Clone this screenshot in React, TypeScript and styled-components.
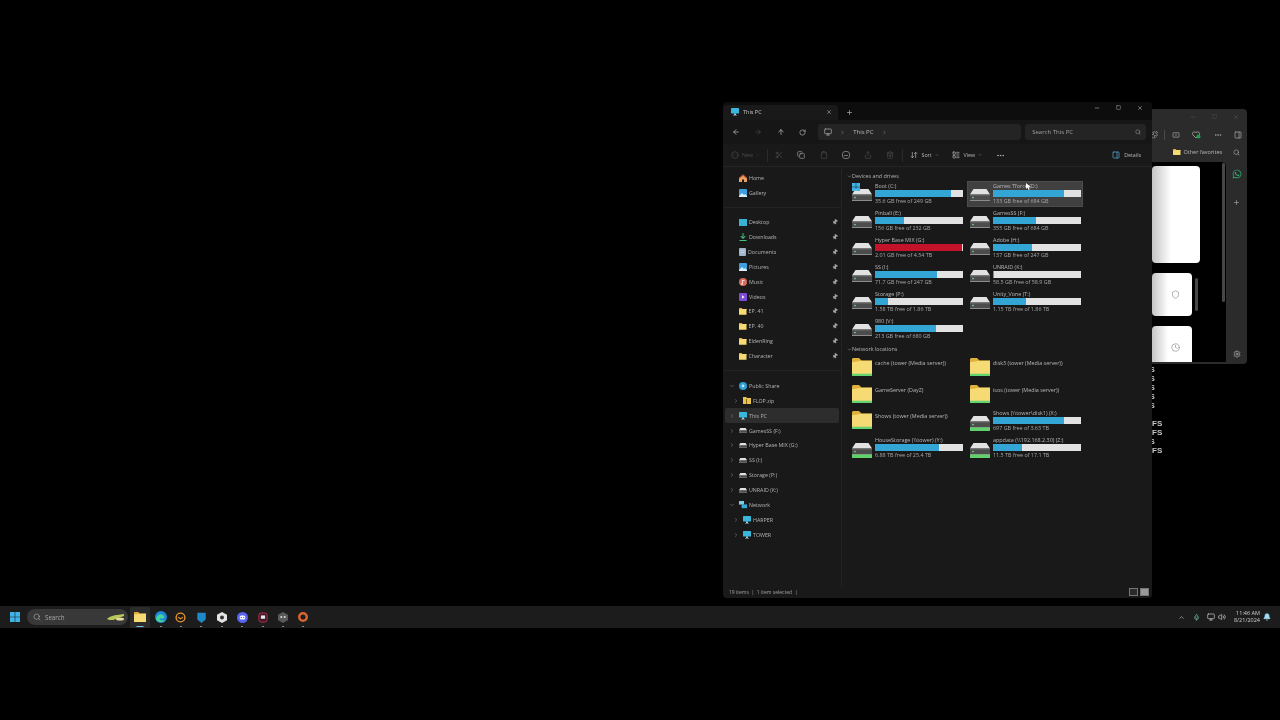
import React from "react";
import styled, { createGlobalStyle } from "styled-components";
import { FaWhatsapp } from "react-icons/fa";
import {
  ArrowDownUp,
  ArrowLeft,
  ArrowRight,
  ArrowUp,
  Bell,
  ChevronDown,
  ChevronRight,
  ChevronUp,
  CircleEllipsis,
  Clock,
  Clipboard,
  Copy,
  LayoutList,
  Mic,
  Minus,
  Monitor,
  MoreHorizontal,
  PanelRight,
  Pin,
  Plus,
  Puzzle,
  RotateCw,
  Scissors,
  Search,
  Settings,
  Share,
  Shield,
  Square,
  SquareSplitHorizontal,
  Trash2,
  Volume2,
  X,
} from "lucide-react";

const GlobalStyle = createGlobalStyle`
  html, body {
    margin: 0;
    padding: 0;
    background: #000;
    font-family: "Open Sans", "Noto Sans", sans-serif;
  }
`;

const Page = styled.div`
  width: 1280px;
  height: 720px;
  display: flex;
  flex-direction: column;
  overflow: hidden;
  background: #000;
  filter: blur(0.3px);
`;

const Desktop = styled.div`
  position: relative;
  height: 606px;
`;

/* Browser window that sits behind the explorer */
const BrowserWindow = styled.div`
  position: absolute;
  left: 1100px;
  top: 109px;
  width: 147px;
  height: 255px;
  display: flex;
  flex-direction: column;
  background: #2b2b2b;
  border-radius: 4px;
`;

const BrowserTitle = styled.div`
  height: 15px;
  display: flex;
  justify-content: flex-end;
  align-items: center;
  gap: 16px;
  padding-right: 8px;
  color: #585858;
`;

const BrowserTools = styled.div`
  height: 22px;
  display: flex;
  justify-content: flex-end;
  align-items: center;
  gap: 12.5px;
  padding-right: 5px;
  color: #b0b0b0;
`;

const ToolDivider = styled.div`
  width: 1px;
  height: 10px;
  margin: 0 -6.25px;
  background: #4a4a4a;
`;

const BrowserBody = styled.div`
  flex: 1;
  display: flex;
  min-height: 0;
`;

const BrowserColumn = styled.div`
  flex: 1;
  display: flex;
  flex-direction: column;
  min-width: 0;
  padding-bottom: 2px;
`;

const FavBar = styled.div`
  height: 12px;
  padding: 0 0 4px 73px;
  flex-shrink: 0;
  display: flex;
  align-items: center;
  gap: 3px;
  font-size: 5.5px;
  color: #b8b8b8;
`;

const BrowserContent = styled.div`
  flex: 1;
  position: relative;
  display: flex;
  flex-direction: column;
  align-items: flex-start;
  gap: 10px;
  padding: 4px 0 0 52px;
  background: #000;
  border-top-right-radius: 5px;
  overflow: hidden;
`;

const WhiteCard = styled.div<{ $w: number; $h: number }>`
  width: ${(p) => p.$w}px;
  height: ${(p) => p.$h}px;
  flex-shrink: 0;
  display: flex;
  align-items: center;
  justify-content: flex-end;
  padding-right: 12px;
  box-sizing: border-box;
  background: linear-gradient(90deg, #c4c4c4, #fff 40%);
  border-radius: 4px;
  color: #9a9a9a;
`;

const ScrollThumb = styled.div<{ $x: number; $y: number; $h: number }>`
  position: absolute;
  left: ${(p) => p.$x}px;
  top: ${(p) => p.$y}px;
  width: 3px;
  height: ${(p) => p.$h}px;
  border-radius: 2px;
  background: #474747;
`;

const BrowserRail = styled.div`
  width: 21px;
  display: flex;
  flex-direction: column;
  align-items: center;
  padding-top: 2.5px;
  color: #b0b0b0;
`;

const RailChat = styled.div`
  display: flex;
  margin: 13px 0 20px;
  color: #2bb673;
`;

const RailSpacer = styled.div`
  flex: 1;
`;

const RailGear = styled.div`
  display: flex;
  margin-bottom: 6px;
`;

const BehindText = styled.div`
  position: absolute;
  left: 1149.5px;
  top: 365px;
  font-family: "Liberation Sans", sans-serif;
  font-size: 8px;
  font-weight: 700;
  color: #c4c4c4;
`;

const BehindRow = styled.div<{ $indent: number }>`
  height: 9px;
  line-height: 9px;
  padding-left: ${(p) => p.$indent}px;
`;

/* File Explorer */
const ExplorerWindow = styled.div`
  position: absolute;
  left: 723px;
  top: 102px;
  width: 429px;
  height: 496px;
  display: flex;
  flex-direction: column;
  background: #191919;
  border-radius: 4px;
  overflow: hidden;
`;

const TabStrip = styled.div`
  height: 18px;
  flex-shrink: 0;
  display: flex;
  align-items: flex-end;
  background: #0d0d0d;
  color: #c8c8c8;
`;

const Tab = styled.div`
  width: 115px;
  height: 15px;
  display: flex;
  align-items: center;
  gap: 4px;
  padding: 0 6px 1px 8px;
  box-sizing: border-box;
  background: #191919;
  border-radius: 4px 4px 0 0;
  font-size: 5.5px;
  color: #c4c4c4;
`;

const TabTitle = styled.span`
  flex: 1;
`;

const NewTab = styled.div`
  margin: 0 0 4px 8px;
  display: flex;
`;

const WindowControls = styled.div`
  margin-left: auto;
  align-self: flex-start;
  display: flex;
  align-items: center;
  gap: 16px;
  height: 11px;
  padding-right: 9px;
`;

const AddressRow = styled.div`
  height: 24px;
  flex-shrink: 0;
  display: flex;
  align-items: center;
  padding: 0 4px 0 9px;
  background: #161616;
  color: #c8c8c8;
`;

const NavButton = styled.div<{ $dim?: boolean }>`
  width: 22.3px;
  display: flex;
  color: ${(p) => (p.$dim ? "#4c4c4c" : "#c8c8c8")};
`;

const Crumbs = styled.div`
  width: 203px;
  height: 16px;
  margin-left: -3px;
  padding-left: 6px;
  box-sizing: border-box;
  display: flex;
  align-items: center;
  gap: 8px;
  background: #242424;
  border-radius: 3px;
  font-size: 6px;
  color: #b8b8b8;
`;

const SearchBox = styled.div`
  width: 121px;
  height: 16px;
  margin-left: 4px;
  padding: 0 5px 0 7px;
  box-sizing: border-box;
  display: flex;
  align-items: center;
  justify-content: space-between;
  background: #242424;
  border-radius: 3px;
  font-size: 6px;
  color: #a0a0a0;
`;

const CommandBar = styled.div`
  height: 23px;
  flex-shrink: 0;
  display: flex;
  align-items: center;
  padding: 0 11px 0 8px;
  background: #191919;
  border-bottom: 1px solid #242424;
  color: #555;
  box-sizing: border-box;
`;

const CommandItem = styled.div<{ $w: number; $tone?: string }>`
  width: ${(p) => p.$w}px;
  display: flex;
  align-items: center;
  gap: 3px;
  font-size: 5.3px;
  color: ${(p) => p.$tone || "#4c4c4c"};
`;

const CommandDivider = styled.div`
  width: 1px;
  height: 13px;
  margin-right: 7px;
  background: #2a2a2a;
`;

const DetailsButton = styled.div`
  margin-left: auto;
  display: flex;
  align-items: center;
  gap: 4px;
  font-size: 5.3px;
  color: #b8b8b8;
`;

const Body = styled.div`
  flex: 1;
  display: flex;
  min-height: 0;
`;

const Sidebar = styled.nav`
  width: 119px;
  flex-shrink: 0;
  padding-top: 4px;
  box-sizing: border-box;
  border-right: 1px solid #232323;
`;

const SideRow = styled.div<{ $depth: number; $active?: boolean }>`
  position: relative;
  height: 14.9px;
  display: flex;
  align-items: center;
  gap: 2px;
  margin: 0 2px;
  padding-left: ${(p) => 14 + p.$depth * 4}px;
  border-radius: 2px;
  background: ${(p) => (p.$active ? "#2d2d2d" : "transparent")};
  font-size: 5.3px;
  color: #b4b4b4;
`;

const Twisty = styled.span<{ $depth: number }>`
  position: absolute;
  left: ${(p) => 4 + p.$depth * 4}px;
  display: flex;
  color: #8f8f8f;
`;

const SidePin = styled.span`
  position: absolute;
  right: 1px;
  display: flex;
  color: #a8a8a8;
  transform: rotate(35deg);
`;

const SideDivider = styled.div<{ $extra?: number }>`
  height: 1px;
  margin: 6.5px 0 ${(p) => 6.4 + (p.$extra || 0)}px;
  background: #232323;
`;

const Main = styled.main`
  flex: 1;
  padding: 4px 0 0 7px;
  box-sizing: border-box;
`;

const SectionHeading = styled.div<{ $gap: number }>`
  height: 10px;
  margin: 0 0 ${(p) => p.$gap}px -2px;
  display: flex;
  align-items: center;
  font-size: 5.4px;
  color: #b4b4b4;
`;

const TileGrid = styled.div<{ $rowGap: number }>`
  display: grid;
  grid-template-columns: 116px 116px;
  grid-auto-rows: 26px;
  column-gap: 2px;
  row-gap: ${(p) => p.$rowGap}px;
  margin-bottom: 2px;
`;

const Tile = styled.div<{ $selected?: boolean }>`
  position: relative;
  display: flex;
  align-items: flex-start;
  gap: 3px;
  padding-left: 3px;
  box-sizing: border-box;
  background: ${(p) => (p.$selected ? "#404040" : "transparent")};
  outline: ${(p) => (p.$selected ? "1px solid #4c4c4c" : "none")};
  outline-offset: -1px;
`;

const TileIcon = styled.div<{ $top: number }>`
  width: 20px;
  height: 26px;
  padding-top: ${(p) => p.$top}px;
  box-sizing: border-box;
  flex-shrink: 0;
  display: flex;
  align-items: flex-start;
`;

const TileText = styled.div<{ $folder?: boolean }>`
  width: 88px;
  padding-top: ${(p) => (p.$folder ? 5 : 2)}px;
  font-size: 5.4px;
  line-height: 6px;
  color: #b8b8b8;
  white-space: nowrap;
`;

const Track = styled.div`
  height: 7px;
  margin: 1px 0 1px;
  background: #e2e2e2;
`;

const Fill = styled.div<{ $pct: number; $full?: boolean }>`
  width: ${(p) => p.$pct}%;
  height: 100%;
  background: ${(p) => (p.$full ? "#c4122a" : "#33a6d6")};
`;

const Sub = styled.div`
  color: #a8a8a8;
`;

const BootBadge = styled.div`
  position: absolute;
  left: 3px;
  top: 2px;
  display: flex;
`;

const Cursor = styled.div`
  position: absolute;
  left: 59px;
  top: 2px;
  display: flex;
`;

const StatusBar = styled.footer`
  height: 12px;
  flex-shrink: 0;
  display: flex;
  align-items: center;
  padding: 0 3px 0 6px;
  font-size: 5px;
  color: #a4a4a4;
`;

const StatusViews = styled.div`
  margin-left: auto;
  display: flex;
  gap: 2px;
`;

const ViewButton = styled.div<{ $on?: boolean }>`
  width: 7px;
  height: 6px;
  border: 0.5px solid #777;
  background: ${(p) => (p.$on ? "#9a9a9a" : "#2a2a2a")};
`;

/* Taskbar */
const Taskbar = styled.footer`
  height: 22px;
  flex-shrink: 0;
  display: flex;
  align-items: center;
  padding: 0 9px 0 10px;
  background: #1c1c1c;
`;

const SearchPill = styled.div`
  width: 101px;
  height: 16px;
  margin-left: 7px;
  padding: 0 2px 0 6px;
  box-sizing: border-box;
  display: flex;
  align-items: center;
  gap: 4px;
  border-radius: 8px;
  background: #383838;
  font-size: 6.2px;
  color: #a8a8a8;
`;

const PillArt = styled.div`
  margin-left: auto;
  display: flex;
`;

const AppRow = styled.div`
  margin-left: 2px;
  display: flex;
  align-items: center;
`;

const AppSlot = styled.div<{ $active?: boolean }>`
  position: relative;
  width: 20.4px;
  height: 21px;
  display: flex;
  align-items: center;
  justify-content: center;
  border-radius: 2px;
  background: ${(p) => (p.$active ? "#2c2c2c" : "transparent")};
`;

const RunDot = styled.span<{ $active?: boolean }>`
  position: absolute;
  bottom: 1px;
  left: 50%;
  transform: translateX(-50%);
  width: ${(p) => (p.$active ? 7 : 2)}px;
  height: 1px;
  background: ${(p) => (p.$active ? "#6fc3e8" : "#8a8a8a")};
`;

const Tray = styled.div`
  margin-left: auto;
  display: flex;
  align-items: center;
  color: #d0d0d0;
`;

const TrayIcon = styled.div<{ $gap: number; $color?: string }>`
  display: flex;
  margin-right: ${(p) => p.$gap}px;
  color: ${(p) => p.$color || "inherit"};
`;

const Clockface = styled.div`
  width: 34px;
  text-align: right;
  font-size: 5.5px;
  line-height: 7px;
  color: #cfcfcf;
  margin-right: 3px;
`;

/* Coloured shell icons */
const DriveIcon: React.FC<{ net?: boolean; small?: boolean }> = ({ net, small }) => {
  const h = net ? 15 : 12;
  return (
    <svg width={small ? 8 : 20} height={small ? 5 : h} viewBox={`0 0 20 ${h}`} preserveAspectRatio="none">
      <path d="M3.5 0h13L20 5.500H0z" fill="#e2e2e2" />
      <path d="M0 5.500h20v6H0z" fill="#4c4c4c" />
      <path d="M0 5.500h20v.8H0zM0 11h20v1H0z" fill="#8c8c8c" />
      <circle cx="3" cy="8.600" r="0.800" fill="#7fe08a" />
      {net && <path d="M0 11.500h20V15H0z" fill="#5fd06a" />}
    </svg>
  );
};

const FolderIcon: React.FC<{ size?: number; green?: boolean }> = ({ size = 20, green }) => (
  <svg width={size} height={size * 0.9} viewBox="0 0 20 18">
    <path d="M0 1.500C0 .7.700 0 1.500 0H7l2.500 2.500H20V5H0z" fill="#e0b03a" />
    <path d="M0 4.200 9.500 2.800H20V18H0z" fill="#f6da74" />
    {green && <path d="M0 15.800h20V18H0z" fill="#63d46f" />}
  </svg>
);

const WinLogo: React.FC<{ size: number }> = ({ size }) => (
  <svg width={size} height={size} viewBox="0 0 10 10">
    <path d="M0 0h4.700v4.700H0zM5.300 0H10v4.700H5.300zM0 5.300h4.700V10H0zM5.300 5.300H10V10H5.300z" fill="#3fb4e8" />
  </svg>
);

const ShellIcon: React.FC<{ kind: string }> = ({ kind }) => {
  switch (kind) {
    case "home":
      return (
        <svg width="8" height="8" viewBox="0 0 8 8">
          <path d="M4 .5 8 4v4H5V5.500H3V8H0V4z" fill="#e8a15e" />
          <path d="M4 .5 8 4 7.400 4.600 4 1.700.6 4.600 0 4z" fill="#c9482f" />
        </svg>
      );
    case "gallery":
    case "pictures":
      return (
        <svg width="8" height="8" viewBox="0 0 8 8">
          <rect width="8" height="8" rx="1" fill="#3d9fe0" />
          <path d="M0 7l3-3 2 2 1-1 2 2v1H0z" fill="#d6eefb" />
        </svg>
      );
    case "desktop":
      return (
        <svg width="8" height="7" viewBox="0 0 8 7">
          <rect width="8" height="7" fill="#37b2d6" />
        </svg>
      );
    case "downloads":
      return (
        <svg width="8" height="8" viewBox="0 0 8 8">
          <path d="M3.500 0h1v4.200L6 2.800l.6.600L4 6 1.400 3.400l.6-.6 1.500 1.400zM.5 7h7v1h-7z" fill="#3fc47a" />
        </svg>
      );
    case "documents":
      return (
        <svg width="7" height="8" viewBox="0 0 7 8">
          <rect width="7" height="8" rx="1" fill="#9fb4cc" />
          <path d="M1.500 2h4v.6h-4zM1.500 4h4v.6h-4z" fill="#e8eef5" />
        </svg>
      );
    case "music":
      return (
        <svg width="8" height="8" viewBox="0 0 8 8">
          <circle cx="4" cy="4" r="4" fill="#d86a5e" />
          <path d="M3 2h2.600v1H4v3a1 1 0 1 1-1-1z" fill="#f4d5d0" />
        </svg>
      );
    case "videos":
      return (
        <svg width="8" height="8" viewBox="0 0 8 8">
          <rect width="8" height="8" rx="1" fill="#7c4bd8" />
          <path d="M3 2.200 5.600 4 3 5.800z" fill="#eee" />
        </svg>
      );
    case "folder":
      return <FolderIcon size={7.5} />;
    case "share":
      return (
        <svg width="8" height="8" viewBox="0 0 8 8">
          <circle cx="4" cy="4" r="4" fill="#2f9fd8" />
          <circle cx="4" cy="4" r="1.400" fill="#bfe6f7" />
        </svg>
      );
    case "zip":
      return (
        <svg width="8" height="7" viewBox="0 0 8 7">
          <path d="M0 0h3l1 1h4v6H0z" fill="#e9c44f" />
          <path d="M3 2h1v5H3z" fill="#8a6a20" />
        </svg>
      );
    case "pc":
      return (
        <svg width="8" height="8" viewBox="0 0 8 8">
          <rect width="8" height="5.600" rx=".6" fill="#38b6dc" />
          <path d="M3 5.600h2V7h1v.6H2V7h1z" fill="#9fc8d8" />
        </svg>
      );
    case "network":
      return (
        <svg width="8" height="8" viewBox="0 0 8 8">
          <rect y="0" width="5" height="3.600" fill="#7ccbe8" />
          <rect x="2.600" y="3.400" width="5.400" height="3.800" fill="#36a9d6" />
        </svg>
      );
    case "drive":
      return <DriveIcon small />;
    default:
      return null;
  }
};

type SideItem = {
  label: string;
  icon: string;
  pin?: boolean;
  depth?: number;
  open?: boolean;
  tree?: boolean;
  active?: boolean;
};

const quick: SideItem[] = [
  { label: "Home", icon: "home" },
  { label: "Gallery", icon: "gallery" },
];

const pinned: SideItem[] = [
  { label: "Desktop", icon: "desktop", pin: true },
  { label: "Downloads", icon: "downloads", pin: true },
  { label: "Documents", icon: "documents", pin: true },
  { label: "Pictures", icon: "pictures", pin: true },
  { label: "Music", icon: "music", pin: true },
  { label: "Videos", icon: "videos", pin: true },
  { label: "EP. 41", icon: "folder", pin: true },
  { label: "EP. 40", icon: "folder", pin: true },
  { label: "EldenRing", icon: "folder", pin: true },
  { label: "Character", icon: "folder", pin: true },
];

const tree: SideItem[] = [
  { label: "Public Share", icon: "share", tree: true, open: true },
  { label: "FLOP.zip", icon: "zip", tree: true, depth: 1 },
  { label: "This PC", icon: "pc", tree: true, active: true },
  { label: "GamesSS (F:)", icon: "drive", tree: true },
  { label: "Hyper Base MIX (G:)", icon: "drive", tree: true },
  { label: "SS (I:)", icon: "drive", tree: true },
  { label: "Storage (P:)", icon: "drive", tree: true },
  { label: "UNRAID (K:)", icon: "drive", tree: true },
  { label: "Network", icon: "network", tree: true, open: true },
  { label: "HARPER", icon: "pc", tree: true, depth: 1 },
  { label: "TOWER", icon: "pc", tree: true, depth: 1 },
];

type Drive = {
  name: string;
  free?: string;
  pct?: number;
  full?: boolean;
  boot?: boolean;
  selected?: boolean;
};

const drives: Drive[] = [
  { name: "Boot (C:)", free: "35.6 GB free of 249 GB", pct: 86, boot: true },
  { name: "Games Tforce (D:)", free: "133 GB free of 684 GB", pct: 81, selected: true },
  { name: "Pinball (E:)", free: "156 GB free of 232 GB", pct: 33 },
  { name: "GamesSS (F:)", free: "355 GB free of 684 GB", pct: 49 },
  { name: "Hyper Base MIX (G:)", free: "2.01 GB free of 4.54 TB", pct: 99, full: true },
  { name: "Adobe (H:)", free: "137 GB free of 247 GB", pct: 44 },
  { name: "SS (I:)", free: "71.7 GB free of 247 GB", pct: 71 },
  { name: "UNRAID (K:)", free: "58.5 GB free of 58.9 GB", pct: 1 },
  { name: "Storage (P:)", free: "1.58 TB free of 1.86 TB", pct: 15 },
  { name: "Unity_Vone (T:)", free: "1.15 TB free of 1.86 TB", pct: 38 },
  { name: "980 (V:)", free: "213 GB free of 680 GB", pct: 69 },
];

const network: Drive[] = [
  { name: "cache (tower (Media server))" },
  { name: "disk3 (tower (Media server))" },
  { name: "GameServer (DayZ)" },
  { name: "isos (tower (Media server))" },
  { name: "Shows (tower (Media server))" },
  { name: "Shows (\\\\tower\\disk1) (X:)", free: "697 GB free of 3.63 TB", pct: 81 },
  { name: "HouseStorage (\\\\tower) (Y:)", free: "6.88 TB free of 25.4 TB", pct: 73 },
  { name: "appdata (\\\\192.168.2.30) (Z:)", free: "11.5 TB free of 17.1 TB", pct: 33 },
];

const SideLink: React.FC<{ item: SideItem }> = ({ item }) => {
  const depth = item.depth || 0;
  return (
    <SideRow $depth={depth} $active={item.active}>
      {item.tree && (
        <Twisty $depth={depth}>
          {item.open ? <ChevronDown size={6} /> : <ChevronRight size={6} />}
        </Twisty>
      )}
      <ShellIcon kind={item.icon} />
      <span>{item.label}</span>
      {item.pin && (
        <SidePin>
          <Pin size={6} fill="currentColor" />
        </SidePin>
      )}
    </SideRow>
  );
};

const DriveTile: React.FC<{ drive: Drive; net?: boolean }> = ({ drive, net }) => {
  const isFolder = drive.pct === undefined;
  return (
    <Tile $selected={drive.selected}>
      <TileIcon $top={isFolder ? 3 : 8}>
        {isFolder ? <FolderIcon green={net} /> : <DriveIcon net={net} />}
      </TileIcon>
      {drive.boot && (
        <BootBadge>
          <WinLogo size={8} />
        </BootBadge>
      )}
      <TileText $folder={isFolder}>
        {drive.name}
        {!isFolder && (
          <>
            <Track>
              <Fill $pct={drive.pct as number} $full={drive.full} />
            </Track>
            <Sub>{drive.free}</Sub>
          </>
        )}
      </TileText>
      {drive.selected && (
        <Cursor>
          <svg width="5" height="7" viewBox="0 0 5 7">
            <path d="M0 0v6l1.500-1.400L2.600 7l1-.5-1-2.200H5z" fill="#fff" />
          </svg>
        </Cursor>
      )}
    </Tile>
  );
};

const TaskIcon: React.FC<{ kind: string }> = ({ kind }) => {
  switch (kind) {
    case "explorer":
      return <FolderIcon size={12} />;
    case "edge":
      return (
        <svg width="12" height="12" viewBox="0 0 13 13">
          <circle cx="6.500" cy="6.500" r="6.500" fill="#1e88d8" />
          <path d="M1 9c1-5 5-6 7-5s3 3 1 4H5c0 2 3 3 6 2-2 3-8 3-10-1z" fill="#45d39a" />
        </svg>
      );
    case "mail":
      return (
        <svg width="11" height="11" viewBox="0 0 13 13">
          <circle cx="6.500" cy="6.500" r="5.200" fill="none" stroke="#e8962e" strokeWidth="1.600" />
          <path d="M3.500 6 6.500 8 9.500 6" fill="none" stroke="#e8962e" strokeWidth="1.200" />
        </svg>
      );
    case "store":
      return (
        <svg width="11" height="11" viewBox="0 0 12 13">
          <path d="M1 1h10v8L6 13 1 9z" fill="#1f88c8" />
        </svg>
      );
    case "hex":
      return (
        <svg width="10" height="11" viewBox="0 0 12 13">
          <path d="M6 0l6 3.200v6.600L6 13 0 9.800V3.200z" fill="#e4e4e4" />
          <circle cx="6" cy="6.500" r="2.400" fill="#333" />
        </svg>
      );
    case "discord":
      return (
        <svg width="11" height="11" viewBox="0 0 13 13">
          <circle cx="6.500" cy="6.500" r="6.500" fill="#5865f2" />
          <rect x="3.200" y="4" width="6.600" height="5" rx="2" fill="#fff" />
          <circle cx="5" cy="6.500" r=".8" fill="#5865f2" />
          <circle cx="8" cy="6.500" r=".8" fill="#5865f2" />
        </svg>
      );
    case "red":
      return (
        <svg width="10" height="11" viewBox="0 0 12 13">
          <rect x="1" y="1" width="10" height="11" rx="3" fill="#3a1a2c" stroke="#d0304a" />
          <rect x="3.500" y="4" width="5" height="4" fill="#e9e9e9" />
        </svg>
      );
    case "skull":
      return (
        <svg width="10" height="11" viewBox="0 0 12 13">
          <path d="M6 0l6 3.200v6.600L6 13 0 9.800V3.200z" fill="#595959" />
          <circle cx="4" cy="6" r="1.200" fill="#ddd" />
          <circle cx="8" cy="6" r="1.200" fill="#ddd" />
        </svg>
      );
    case "ring":
      return (
        <svg width="10" height="10" viewBox="0 0 12 12">
          <circle cx="6" cy="6" r="4.500" fill="none" stroke="#d9662e" strokeWidth="3" />
        </svg>
      );
    default:
      return null;
  }
};

const apps = ["explorer", "edge", "mail", "store", "hex", "discord", "red", "skull", "ring"];
const behind = ["S", "S", "S", "S", "S", "", "FS", "FS", "S", "FS"];

const App: React.FC = () => {
  return (
    <>
      <GlobalStyle />
      <Page>
        <Desktop>
          <BehindText>
            {behind.map((text, i) => (
              <BehindRow key={i} $indent={text === "FS" ? 2.5 : 0}>
                {text}
              </BehindRow>
            ))}
          </BehindText>

          <BrowserWindow>
            <BrowserTitle>
              <Minus size={6} />
              <Square size={5} />
              <X size={6} />
            </BrowserTitle>
            <BrowserTools>
              <Puzzle size={8} />
              <ToolDivider />
              <SquareSplitHorizontal size={8} />
              <svg width="9" height="8" viewBox="0 0 9 8">
                <path
                  d="M4 7 .8 3.800C-.4 2 1.800-.3 4 1.600 6.200-.3 8.400 2 7.200 3.800z"
                  fill="none"
                  stroke="#b0b0b0"
                  strokeWidth=".8"
                />
                <circle cx="6.500" cy="5.500" r="2" fill="#1f9d4d" />
              </svg>
              <MoreHorizontal size={8} />
              <PanelRight size={8} />
            </BrowserTools>
            <BrowserBody>
              <BrowserColumn>
                <FavBar>
                  <ShellIcon kind="folder" />
                  Other favorites
                </FavBar>
                <BrowserContent>
                  <WhiteCard $w={48} $h={97} />
                  <WhiteCard $w={40} $h={43}>
                    <Shield size={9} />
                  </WhiteCard>
                  <WhiteCard $w={40} $h={43}>
                    <Clock size={9} />
                  </WhiteCard>
                  <ScrollThumb $x={95} $y={116} $h={33} />
                  <ScrollThumb $x={122} $y={1} $h={139} />
                </BrowserContent>
              </BrowserColumn>
              <BrowserRail>
                <Search size={7} />
                <RailChat>
                  <FaWhatsapp size={10} />
                </RailChat>
                <Plus size={7} />
                <RailSpacer />
                <RailGear>
                  <Settings size={8} />
                </RailGear>
              </BrowserRail>
            </BrowserBody>
          </BrowserWindow>

          <ExplorerWindow>
            <TabStrip>
              <Tab>
                <ShellIcon kind="pc" />
                <TabTitle>This PC</TabTitle>
                <X size={6} />
              </Tab>
              <NewTab>
                <Plus size={7} />
              </NewTab>
              <WindowControls>
                <Minus size={6} />
                <Square size={5} />
                <X size={6} />
              </WindowControls>
            </TabStrip>

            <AddressRow>
              <NavButton>
                <ArrowLeft size={8} />
              </NavButton>
              <NavButton $dim>
                <ArrowRight size={8} />
              </NavButton>
              <NavButton>
                <ArrowUp size={8} />
              </NavButton>
              <NavButton>
                <RotateCw size={7} />
              </NavButton>
              <Crumbs>
                <Monitor size={8} />
                <ChevronRight size={5} />
                This PC
                <ChevronRight size={5} />
              </Crumbs>
              <SearchBox>
                Search This PC
                <Search size={6} />
              </SearchBox>
            </AddressRow>

            <CommandBar>
              <CommandItem $w={36}>
                <CircleEllipsis size={8} />
                New
                <ChevronDown size={4} />
              </CommandItem>
              <CommandDivider />
              <CommandItem $w={22.3}>
                <Scissors size={8} />
              </CommandItem>
              <CommandItem $w={22.3} $tone="#a0a0a0">
                <Copy size={8} />
              </CommandItem>
              <CommandItem $w={22.3}>
                <Clipboard size={8} />
              </CommandItem>
              <CommandItem $w={22.3} $tone="#8c8c8c">
                <svg width="8" height="8" viewBox="0 0 8 8">
                  <rect x=".5" y=".5" width="7" height="7" rx="2.500" fill="none" stroke="currentColor" strokeWidth=".8" />
                  <path d="M2 4.500h4" stroke="currentColor" strokeWidth=".8" />
                </svg>
              </CommandItem>
              <CommandItem $w={22.3}>
                <Share size={8} />
              </CommandItem>
              <CommandItem $w={16}>
                <Trash2 size={8} />
              </CommandItem>
              <CommandDivider />
              <CommandItem $w={42} $tone="#b8b8b8">
                <ArrowDownUp size={8} />
                Sort
                <ChevronDown size={4} />
              </CommandItem>
              <CommandItem $w={44} $tone="#b8b8b8">
                <LayoutList size={8} />
                View
                <ChevronDown size={4} />
              </CommandItem>
              <CommandItem $w={20} $tone="#b8b8b8">
                <MoreHorizontal size={9} />
              </CommandItem>
              <DetailsButton>
                <PanelRight size={8} color="#5fb4dc" />
                Details
              </DetailsButton>
            </CommandBar>

            <Body>
              <Sidebar>
                {quick.map((item) => (
                  <SideLink key={item.label} item={item} />
                ))}
                <SideDivider />
                {pinned.map((item) => (
                  <SideLink key={item.label} item={item} />
                ))}
                <SideDivider $extra={1} />
                {tree.map((item) => (
                  <SideLink key={item.label} item={item} />
                ))}
              </Sidebar>

              <Main>
                <SectionHeading $gap={0}>
                  <ChevronDown size={5} />
                  Devices and drives
                </SectionHeading>
                <TileGrid $rowGap={1}>
                  {drives.map((drive) => (
                    <DriveTile key={drive.name} drive={drive} />
                  ))}
                </TileGrid>
                <SectionHeading $gap={1}>
                  <ChevronDown size={5} />
                  Network locations
                </SectionHeading>
                <TileGrid $rowGap={0.6}>
                  {network.map((drive) => (
                    <DriveTile key={drive.name} drive={drive} net />
                  ))}
                </TileGrid>
              </Main>
            </Body>

            <StatusBar>
              19 items &nbsp;|&nbsp; 1 item selected &nbsp;|
              <StatusViews>
                <ViewButton />
                <ViewButton $on />
              </StatusViews>
            </StatusBar>
          </ExplorerWindow>
        </Desktop>

        <Taskbar>
          <WinLogo size={10} />
          <SearchPill>
            <Search size={8} />
            Search
            <PillArt>
              <svg width="20" height="10" viewBox="0 0 20 10">
                <path d="M1 7c3-3 8-4 10-4l7-1v2l-6 2c-3 2-8 3-11 1z" fill="#b8c85a" />
                <ellipse cx="14" cy="7" rx="4" ry="1.500" fill="#e6dca0" />
              </svg>
            </PillArt>
          </SearchPill>
          <AppRow>
            {apps.map((kind, i) => (
              <AppSlot key={kind} $active={i === 0}>
                <TaskIcon kind={kind} />
                <RunDot $active={i === 0} />
              </AppSlot>
            ))}
          </AppRow>
          <Tray>
            <TrayIcon $gap={8}>
              <ChevronUp size={7} />
            </TrayIcon>
            <TrayIcon $gap={7.5} $color="#7fc4b0">
              <Mic size={7} />
            </TrayIcon>
            <TrayIcon $gap={3}>
              <Monitor size={8} />
            </TrayIcon>
            <TrayIcon $gap={0}>
              <Volume2 size={8} />
            </TrayIcon>
            <Clockface>
              11:46 AM
              <br />
              8/21/2024
            </Clockface>
            <TrayIcon $gap={0} $color="#9fdcf5">
              <Bell size={8} fill="currentColor" />
            </TrayIcon>
          </Tray>
        </Taskbar>
      </Page>
    </>
  );
};

export default App;
